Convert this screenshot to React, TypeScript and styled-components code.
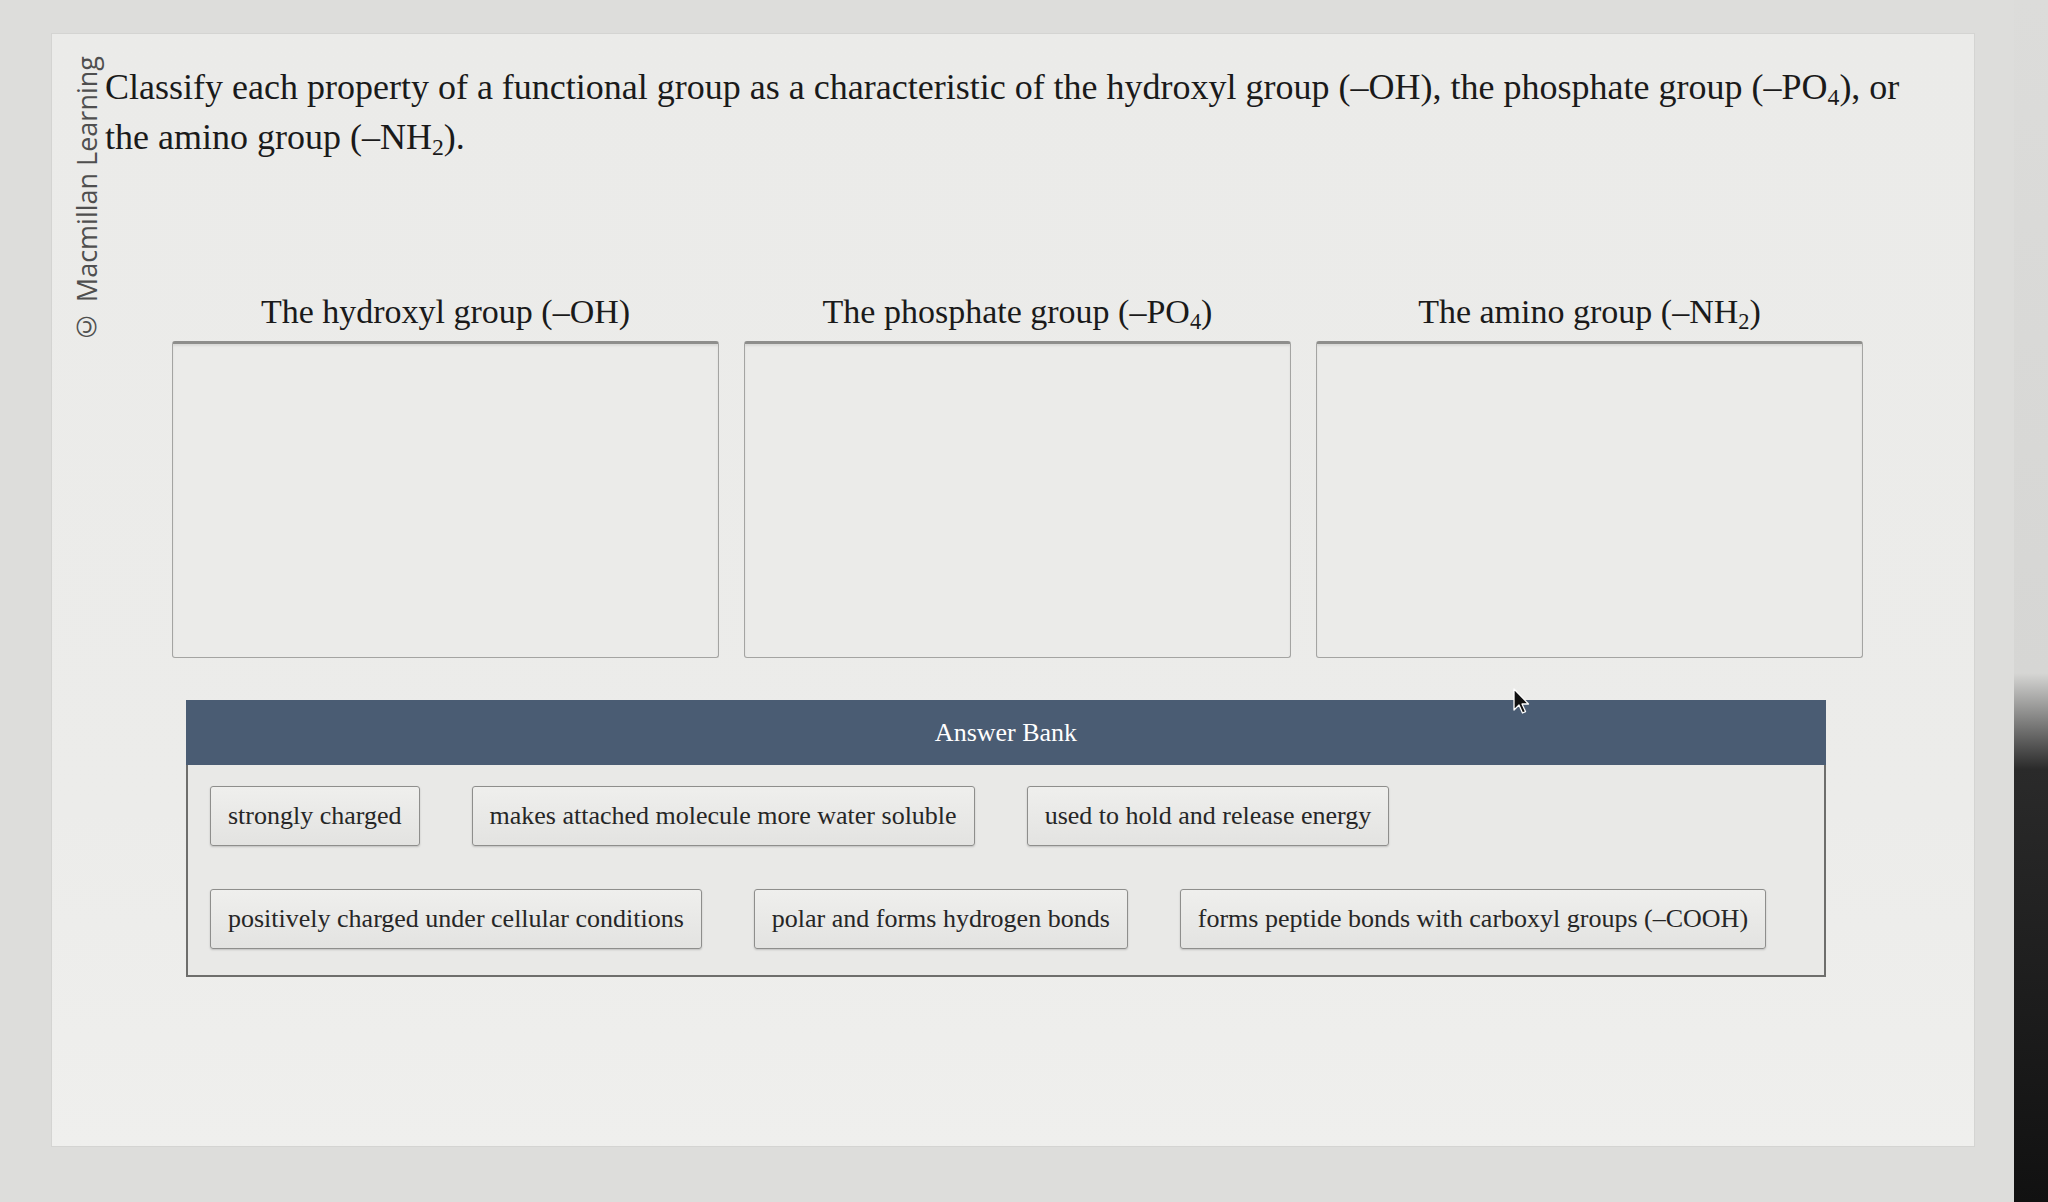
import styled, { createGlobalStyle } from 'styled-components'

const GlobalStyle = createGlobalStyle`
  html, body {
    margin: 0;
    padding: 0;
    background: #dddddb;
    overflow: hidden;
  }
  body {
    font-family: "Liberation Serif", "Times New Roman", serif;
    color: #1f1f1f;
  }
`

const answers = [
  'strongly charged',
  'makes attached molecule more water soluble',
  'used to hold and release energy',
  'positively charged under cellular conditions',
  'polar and forms hydrogen bonds',
  'forms peptide bonds with carboxyl groups (–COOH)',
]

function App() {
  const columns = [
    { key: 'oh', label: <>The hydroxyl group (–OH)</> },
    { key: 'po4', label: <>The phosphate group (–PO<Sub>4</Sub>)</> },
    { key: 'nh2', label: <>The amino group (–NH<Sub>2</Sub>)</> },
  ]

  return (
    <>
      <GlobalStyle />
      <Screen>
        <Stage>
          <Panel>
            <Gutter>
              <Copyright>© Macmillan Learning</Copyright>
            </Gutter>
            <Content>
              <Prompt>
                Classify each property of a functional group as a characteristic of the hydroxyl group (–OH), the
                phosphate group (–PO<Sub>4</Sub>), or the amino group (–NH<Sub>2</Sub>).
              </Prompt>

              <Bins>
                {columns.map((c) => (
                  <Bin key={c.key}>
                    <BinTitle>{c.label}</BinTitle>
                    <DropZone />
                  </Bin>
                ))}
              </Bins>

              <Bank>
                <BankHeader>Answer Bank</BankHeader>
                <BankBody>
                  {answers.map((a) => (
                    <Chip key={a}>{a}</Chip>
                  ))}
                </BankBody>
              </Bank>
            </Content>
          </Panel>
          <Cursor width="18" height="28" viewBox="0 0 18 28">
            <path d="M2 1 L2 22 L7 17 L10.5 25 L13.5 23.6 L10 16 L16.5 16 Z" fill="#111" stroke="#fff" strokeWidth="1.3" strokeLinejoin="round" />
          </Cursor>
        </Stage>
        <Bezel />
      </Screen>
    </>
  )
}

export default App

const Screen = styled.div`
  width: 2048px;
  height: 1202px;
  display: flex;
`

const Stage = styled.div`
  position: relative;
  flex: 1;
  padding: 34px 0 0 52px;
`

const Bezel = styled.div`
  width: 34px;
  background: linear-gradient(to bottom, #dcdcda 0%, #d6d6d4 56%, #2a2a2a 64%, #111 100%);
`

const Panel = styled.div`
  width: 1922px;
  height: 1112px;
  display: flex;
  background: linear-gradient(to bottom, #ebebe9 0%, #ececea 70%, #efefed 100%);
  box-shadow: 0 0 0 1px #d4d4d2;
`

const Gutter = styled.div`
  width: 50px;
  padding: 22px 0 0 16px;
  box-sizing: border-box;
`

const Copyright = styled.div`
  writing-mode: vertical-rl;
  transform: rotate(180deg);
  font-family: "Open Sans", "Liberation Sans", sans-serif;
  font-size: 27px;
  color: #4f4f4f;
  white-space: nowrap;
`

const Content = styled.div`
  flex: 1;
  padding: 28px 0 0 3px;
`

const Prompt = styled.p`
  margin: 0;
  width: 1810px;
  font-size: 36px;
  line-height: 50px;
  color: #1a1a1a;
`

const Sub = styled.sub`
  font-size: 0.66em;
  line-height: 1;
  vertical-align: -0.25em;
`

const Bins = styled.div`
  display: grid;
  grid-template-columns: repeat(3, 547px);
  column-gap: 25px;
  margin: 128px 0 0 67px;
`

const Bin = styled.div`
  display: flex;
  flex-direction: column;
`

const BinTitle = styled.div`
  text-align: center;
  font-size: 34px;
  line-height: 44px;
  color: #1a1a1a;
`

const DropZone = styled.div`
  margin-top: 7px;
  height: 317px;
  box-sizing: border-box;
  background: #ebebe9;
  border: 1px solid #a4a4a2;
  border-top: 3px solid #8e8e8c;
  border-radius: 3px;
  box-shadow: inset 0 2px 2px rgba(0, 0, 0, 0.08);
`

const Bank = styled.div`
  width: 1640px;
  margin: 42px 0 0 81px;
`

const BankHeader = styled.div`
  height: 65px;
  display: flex;
  align-items: center;
  justify-content: center;
  background: #4a5c73;
  color: #ffffff;
  font-size: 26px;
`

const BankBody = styled.div`
  display: flex;
  flex-wrap: wrap;
  gap: 43px 52px;
  padding: 21px 22px 26px;
  background: #e9e9e7;
  border: 2px solid #6e6e6c;
  border-top: none;
`

const Chip = styled.div`
  height: 60px;
  display: flex;
  align-items: center;
  padding: 0 17px;
  box-sizing: border-box;
  font-size: 26px;
  color: #262626;
  background: linear-gradient(to bottom, #efefed, #e3e3e1);
  border: 1px solid #8e8e8c;
  border-radius: 3px;
  box-shadow: 0 1px 2px rgba(0, 0, 0, 0.18);
`

const Cursor = styled.svg`
  position: absolute;
  left: 1512px;
  top: 688px;
`
